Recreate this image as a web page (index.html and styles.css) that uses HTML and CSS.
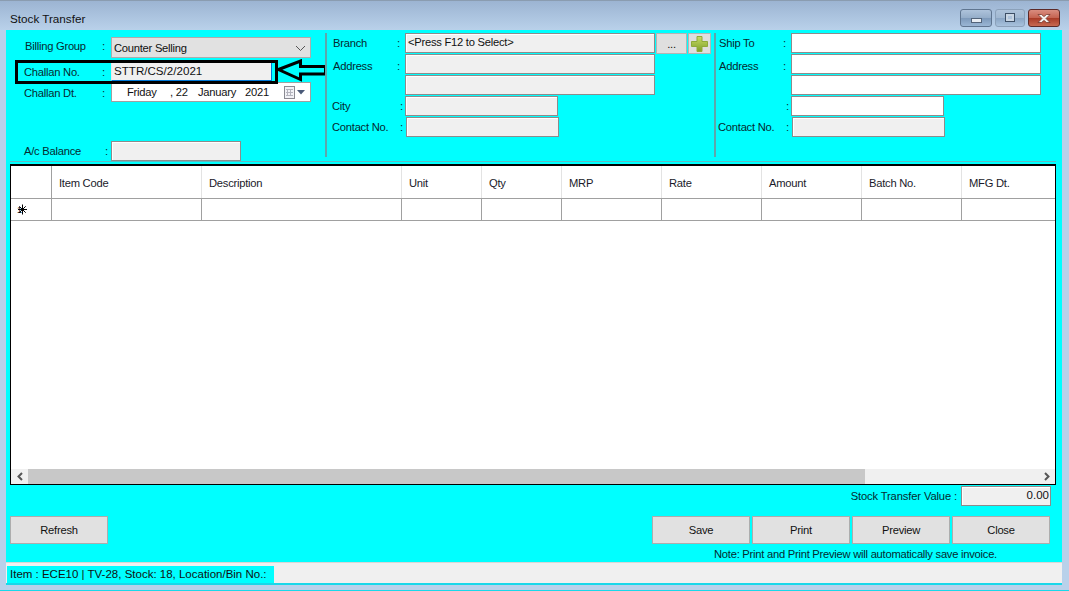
FILE: index.html
```html
<!DOCTYPE html>
<html lang="en">
<head>
<meta charset="utf-8">
<title>Stock Transfer</title>
<link rel="stylesheet" href="styles.css">
</head>
<body>
<div class="window">
  <div class="titlebar">
    <span class="title">Stock Transfer</span>
    <div class="caption">
      <div class="cap cap-min"><span class="min-glyph"></span></div>
      <div class="cap cap-max"><span class="max-glyph"></span></div>
      <div class="cap cap-close">
        <svg width="14" height="9" viewBox="0 0 14 9"><path d="M1 .5h3.500L7 2.600 9.500 .5H13L9 4.500l4 4H9.500L7 6.400 4.500 8.500H1l4-4z" fill="#f4f0ee" stroke="#6a2a20" stroke-width=".7"/></svg>
      </div>
    </div>
  </div>
  <div class="client">
    <div class="header">
      <div class="panel panel-left">
        <div class="row row-billing">
          <span class="lbl lbl-left">Billing Group</span><span class="colon colon-left">:</span>
          <div class="combo"><span>Counter Selling</span>
            <svg width="11" height="7" viewBox="0 0 11 7"><path d="M1 1l4.500 4.500L10 1" fill="none" stroke="#555" stroke-width="1"/></svg>
          </div>
        </div>
        <div class="row row-challan">
          <span class="lbl lbl-left">Challan No.</span><span class="colon colon-left">:</span>
          <div class="challan-input">STTR/CS/2/2021</div>
        </div>
        <div class="row row-date">
          <span class="lbl lbl-left">Challan Dt.</span><span class="colon colon-left">:</span>
          <div class="datebox">
            <span class="d-day">Friday</span><span class="d-num">, 22</span><span class="d-mon">January</span><span class="d-yr">2021</span>
            <svg class="cal" width="21" height="13" viewBox="0 0 21 13">
              <rect x=".5" y=".5" width="10" height="12" fill="#f2f2f6" stroke="#8a8a92"/>
              <path d="M2 3.500h7M2 6.500h7M2 9.500h7M3.500 3v7M6.500 3v7" stroke="#b4b4be" stroke-width="1"/>
              <path d="M13 4h8l-4 4.500z" fill="#4a5a78"/>
            </svg>
          </div>
        </div>
        <div class="row row-balance">
          <span class="lbl lbl-left">A/c Balance</span><span class="colon colon-bal">:</span>
          <div class="field field-ro w130"></div>
        </div>
        <div class="challan-mark"></div>
        <svg class="arrow" width="52" height="23" viewBox="0 0 52 23"><path d="M2.500 10.500L24.500 2v5.500H49.500v7.500H24.500V20.500z" fill="#00ffff" stroke="#000" stroke-width="3"/></svg>
      </div>
      <div class="panel panel-mid">
        <div class="row">
          <span class="lbl lbl-mid">Branch</span><span class="colon colon-mid">:</span>
          <div class="field field-ro w250 with-text">&lt;Press F12 to Select&gt;</div>
          <div class="btn-dots">...</div>
          <div class="btn-plus">
            <svg width="17" height="16" viewBox="0 0 17 16"><defs><linearGradient id="gp" x1="0" y1="0" x2="0" y2="1"><stop offset="0" stop-color="#c9dc66"/><stop offset="1" stop-color="#7ea02a"/></linearGradient></defs><path d="M6 .5h5v5h5.500v5H11v5H6v-5H.5v-5H6z" fill="url(#gp)" stroke="#8faa3a"/></svg>
          </div>
        </div>
        <div class="row">
          <span class="lbl lbl-mid lbl-low">Address</span><span class="colon colon-mid lbl-low">:</span>
          <div class="field field-ro w250"></div>
        </div>
        <div class="row"><span class="spacer-mid"></span><div class="field field-ro w250"></div></div>
        <div class="row">
          <span class="lbl lbl-mid2">City</span><span class="colon colon-mid2">:</span>
          <div class="field field-ro w153"></div>
        </div>
        <div class="row">
          <span class="lbl lbl-mid2">Contact No.</span><span class="colon colon-mid2">:</span>
          <div class="field field-ro w153 nudge"></div>
        </div>
      </div>
      <div class="panel panel-right">
        <div class="row">
          <span class="lbl lbl-right">Ship To</span><span class="colon colon-right">:</span>
          <div class="field w250"></div>
        </div>
        <div class="row">
          <span class="lbl lbl-right lbl-low">Address</span><span class="colon colon-right lbl-low">:</span>
          <div class="field w250"></div>
        </div>
        <div class="row"><span class="spacer-right"></span><div class="field w250"></div></div>
        <div class="row">
          <span class="lbl lbl-right2"></span><span class="colon colon-right2">:</span>
          <div class="field w153"></div>
        </div>
        <div class="row">
          <span class="lbl lbl-right2">Contact No.</span><span class="colon colon-right2">:</span>
          <div class="field field-ro w153 nudge"></div>
        </div>
      </div>
    </div>
    <div class="grid">
      <div class="grid-row grid-head">
        <div class="cell cell-corner"></div>
        <div class="cell">Item Code</div>
        <div class="cell">Description</div>
        <div class="cell">Unit</div>
        <div class="cell">Qty</div>
        <div class="cell">MRP</div>
        <div class="cell">Rate</div>
        <div class="cell">Amount</div>
        <div class="cell">Batch No.</div>
        <div class="cell">MFG Dt.</div>
      </div>
      <div class="grid-row grid-new">
        <div class="cell cell-mark">
          <svg width="12" height="11" viewBox="0 0 12 11"><text x="0" y="9" class="mark-one">1</text><path d="M5.500 .5v10M1 5.500h9M2.300 2.300l6.400 6.400M8.700 2.300l-6.400 6.400" stroke="#000" stroke-width="1"/></svg>
        </div>
        <div class="cell"></div><div class="cell"></div><div class="cell"></div><div class="cell"></div>
        <div class="cell"></div><div class="cell"></div><div class="cell"></div><div class="cell"></div><div class="cell"></div>
      </div>
      <div class="grid-body"></div>
      <div class="hscroll">
        <div class="sb-btn"><svg width="8" height="9" viewBox="0 0 8 9"><path d="M6 1L2.500 4.500 6 8" fill="none" stroke="#555" stroke-width="2"/></svg></div>
        <div class="sb-thumb"></div>
        <div class="sb-track"></div>
        <div class="sb-btn"><svg width="8" height="9" viewBox="0 0 8 9"><path d="M2 1l3.500 3.500L2 8" fill="none" stroke="#555" stroke-width="2"/></svg></div>
      </div>
    </div>
    <div class="total-row">
      <span class="total-lbl">Stock Transfer Value :</span>
      <div class="total-val">0.00</div>
    </div>
    <div class="actions">
      <div class="btn">Refresh</div>
      <div class="actions-right">
        <div class="btn">Save</div>
        <div class="btn">Print</div>
        <div class="btn">Preview</div>
        <div class="btn">Close</div>
      </div>
    </div>
    <div class="note">Note: Print and Print Preview will automatically save invoice.</div>
    <div class="status"><span class="status-text">Item : ECE10 | TV-28, Stock: 18, Location/Bin No.:</span></div>
  </div>
</div>
</body>
</html>
```
FILE: styles.css
```css
* { box-sizing: border-box; }
html, body { margin: 0; padding: 0; }
body {
  width: 1069px;
  height: 591px;
  overflow: hidden;
  font-family: "Liberation Sans", Arial, sans-serif;
  font-size: 11.2px;
  letter-spacing: -0.25px;
  color: #101010;
}
.window {
  width: 1069px;
  height: 591px;
  display: flex;
  flex-direction: column;
  background: #b9d1ea;
  border-bottom: 1px solid #19d7e9;
  border-top: 1px solid #8a9cb0;
}
.titlebar {
  height: 29px;
  flex: none;
  display: flex;
  align-items: flex-start;
  justify-content: space-between;
  background: linear-gradient(#9cb4d2, #b9d1ea);
}
.title { margin: 11px 0 0 10px; line-height: 14px; font-size: 11.7px; letter-spacing: 0; color: #111; }
.caption { display: flex; margin: 8px 9px 0 0; gap: 3px; }
.cap {
  height: 18px;
  border: 1px solid #5f7590;
  border-radius: 3px;
  display: flex;
  align-items: center;
  justify-content: center;
}
.cap-min { width: 32px; background: linear-gradient(#aec3db 0, #94adc9 50%, #7d99ba 51%, #9ab6d4 100%); }
.cap-max { width: 30px; background: linear-gradient(#aec3db 0, #a0b7d1 50%, #8aa5c4 51%, #a8c2dd 100%); border-color: #8ba1ba; }
.cap-close { width: 32px; background: linear-gradient(#d98d80 0, #c4614f 50%, #a83a26 51%, #c86a52 100%); border-color: #5c2a28; }
.min-glyph { width: 11px; height: 5px; margin-top: 5px; background: #e8edf3; border: 1px solid #53647a; }
.max-glyph { width: 10px; height: 9px; margin-top: -1px; border: 1px solid #3d4f66; background: #aec3db; box-shadow: inset 0 2px 0 #c9d6e4, inset 0 0 0 2px #c9d6e4; }
.client {
  flex: 1;
  margin: 0 7px 5px 6px;
  background: #00ffff;
  display: flex;
  flex-direction: column;
  min-height: 0;
}
.header { height: 133px; flex: none; display: flex; position: relative; }
.header::after {
  content: "";
  position: absolute;
  left: 4px;
  right: 6px;
  bottom: 1px;
  height: 1px;
  background: #5fb9c0;
}
.panel { position: relative; height: 127px; }
.panel-left { width: 319px; flex: none; }
.panel-mid { width: 389px; flex: none; border-left: 2px solid #5ea6ab; margin-top: 3px; padding-left: 6px; height: 124px; }
.panel-right { flex: 1; border-left: 2px solid #5ea6ab; margin-top: 3px; padding-left: 3px; height: 124px; }
.row { display: flex; align-items: flex-start; height: 21px; }
.lbl { flex: none; line-height: 14px; margin-top: 3px; color: #062a30; }
.colon { flex: none; line-height: 14px; margin-top: 3px; color: #062a30; }
.lbl.lbl-low, .colon.lbl-low { margin-top: 5px; }
.row-billing { margin-top: 7px; padding-left: 19px; height: 21px; }
.row-billing .lbl, .row-billing .colon { margin-top: 2px; }
.row-challan { margin-top: 4px; padding-left: 18px; height: 20px; }
.row-date { padding-left: 18px; height: 20px; }
.row-date .lbl, .row-date .colon { margin-top: 4px; }
.row-balance { margin-top: 39px; padding-left: 18px; height: 20px; }
.lbl-left { width: 78px; }
.row-billing .lbl-left { width: 77px; }
.colon-left { width: 9px; }
.row-balance .lbl-left { width: 81px; }
.colon-bal { width: 6px; }
.combo {
  width: 200px;
  height: 21px;
  background: #e1e1e1;
  border: 1px solid #acacac;
  display: flex;
  align-items: center;
  justify-content: space-between;
  padding: 1px 4px 0 2px;
}
.challan-input {
  width: 161px;
  height: 19px;
  background: #f0f0f0;
  border: 1px solid #0078d7;
  border-top-color: #e8e8e8;
  border-left-color: #e8e8e8;
  padding-left: 2px;
  line-height: 16px;
  font-size: 11.6px;
  letter-spacing: 0;
  color: #111;
}
.datebox {
  width: 200px;
  height: 20px;
  background: #fff;
  border: 1px solid #a0a0a0;
  display: flex;
  align-items: center;
  padding-left: 15px;
  color: #111;
}
.d-day { width: 43px; }
.d-num { width: 28px; }
.d-mon { width: 47px; }
.d-yr { width: 39px; }
.cal { flex: none; }
.challan-mark {
  position: absolute;
  left: 9px;
  top: 30px;
  width: 263px;
  height: 24px;
  border: 3px solid #000;
  pointer-events: none;
}
.arrow { position: absolute; left: 270px; top: 29px; }
.field {
  flex: none;
  height: 20px;
  background: #fff;
  border: 1px solid #8c8c8c;
}
.field-ro { background: #f0f0f0; box-shadow: inset 1px 1px 0 #fff; }
.with-text { padding-left: 2px; line-height: 17px; color: #111; }
.w250 { width: 250px; }
.w153 { width: 153px; }
.w130 { width: 130px; }
.nudge { margin-left: 1px; }
.lbl-mid { width: 64px; }
.colon-mid { width: 8px; }
.spacer-mid { width: 72px; flex: none; }
.lbl-mid2 { width: 68px; margin-left: -1px; }
.colon-mid2 { width: 5px; }
.btn-dots {
  width: 31px;
  height: 21px;
  margin-left: 1px;
  background: #dfdfdf;
  border: 1px solid #b4b4b4;
  text-align: center;
  line-height: 21px;
}
.btn-plus {
  width: 23px;
  height: 21px;
  margin-left: 1px;
  background: #dfdfdf;
  border: 1px solid #b4b4b4;
  display: flex;
  align-items: center;
  justify-content: center;
}
.lbl-right { width: 64px; }
.colon-right { width: 8px; }
.spacer-right { width: 72px; flex: none; }
.lbl-right2 { width: 68px; margin-left: -1px; }
.colon-right2 { width: 5px; }
.grid {
  height: 321px;
  flex: none;
  margin: 1px 6px 0 4px;
  border: 1px solid #000;
  border-top-width: 2px;
  background: #fff;
  display: flex;
  flex-direction: column;
}
.grid-row {
  display: grid;
  grid-template-columns: 41px 150px 200px 80px 80px 100px 100px 100px 100px 93px;
  flex: none;
}
.grid-head { height: 33px; border-bottom: 1px solid #a0a0a0; }
.grid-head .cell { border-right: 1px solid #e3e3e3; padding: 10px 0 0 7px; line-height: 14px; color: #1a1a2a; }
.grid-head .cell-corner { border-right-color: #a0a0a0; }
.grid-head .cell:last-child { border-right: 0; }
.grid-new { height: 22px; border-bottom: 1px solid #a0a0a0; }
.grid-new .cell { border-right: 1px solid #a0a0a0; }
.grid-new .cell:last-child { border-right: 0; }
.cell-mark { padding: 5px 0 0 6px; line-height: 0; }
.mark-one { font-size: 9px; fill: #000; font-family: "Liberation Sans", sans-serif; }
.grid-body { flex: 1; }
.hscroll { height: 15px; flex: none; display: flex; background: #f0f0f0; }
.sb-btn { width: 17px; flex: none; display: flex; align-items: center; justify-content: center; }
.sb-thumb { width: 837px; background: #c8c8c8; }
.sb-track { flex: 1; }
.total-row {
  flex: none;
  height: 21px;
  margin-top: 1px;
  display: flex;
  justify-content: flex-end;
  align-items: flex-start;
  padding-right: 11px;
}
.total-lbl { margin: 3px 4px 0 0; line-height: 14px; letter-spacing: -0.13px; color: #062a30; }
.total-val {
  width: 90px;
  height: 20px;
  background: #f0f0f0;
  border: 1px solid #8c8c8c;
  box-shadow: inset 1px 1px 0 #fff;
  text-align: right;
  padding-right: 1px;
  line-height: 17px;
  font-size: 11.5px;
  letter-spacing: 0;
  color: #111;
}
.actions {
  flex: none;
  margin: 9px 12px 0 4px;
  display: flex;
  justify-content: space-between;
}
.actions-right { display: flex; gap: 2px; }
.btn {
  width: 98px;
  height: 28px;
  background: #e1e1e1;
  border: 1px solid #adadad;
  text-align: center;
  line-height: 26px;
  color: #111;
}
.note {
  flex: none;
  height: 18px;
  padding-left: 708px;
  line-height: 20px;
  color: #062a30;
  white-space: nowrap;
}
.status {
  flex: 1;
  background: #f0f0f0;
  border-top: 1px solid #d7d7d7;
  border-bottom: 2px solid #19d7e9;
  padding: 3px 0 0 1px;
}
.status-text {
  display: block;
  width: 267px;
  height: 17px;
  background: #00ffff;
  padding-left: 3px;
  line-height: 17px;
  font-size: 11.5px;
  letter-spacing: 0;
  color: #111;
  white-space: nowrap;
}
```
